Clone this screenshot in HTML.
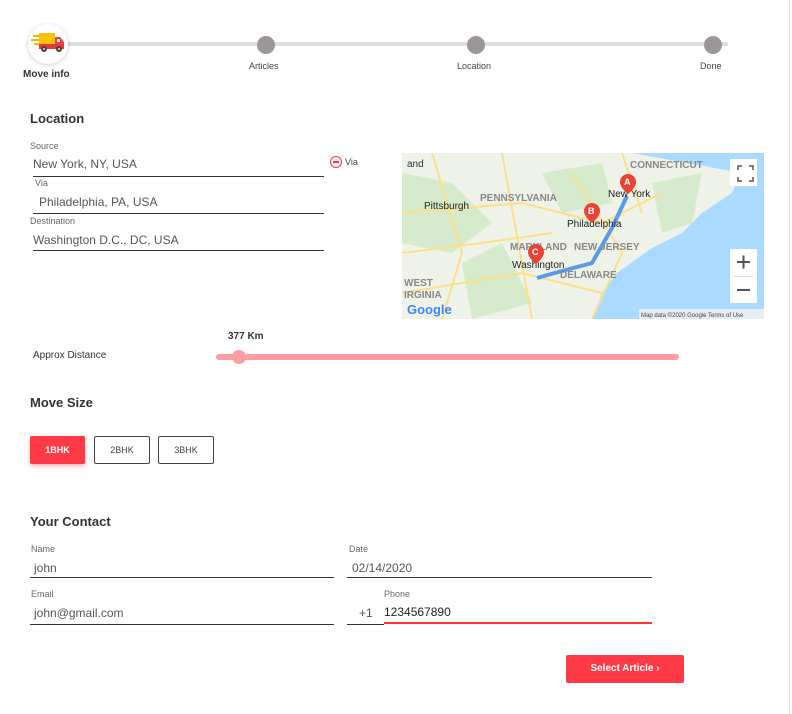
<!DOCTYPE html>
<html><head><meta charset="utf-8"><style>
*{margin:0;padding:0;box-sizing:border-box}
body{width:792px;height:714px;background:#fff;font-family:"Liberation Sans",sans-serif;color:#333;position:relative;overflow:hidden}
.a{position:absolute}
.lbl{font-size:9px;color:#666}
.val{font-size:12px;color:#555}
.line{height:1px;background:#333}
.h{font-size:13px;font-weight:bold;color:#333}
.dot{width:18px;height:18px;border-radius:50%;background:#9b9797}
.st{font-size:9px;color:#444}
.btn{border:1px solid #444;border-radius:2px;font-size:9px;color:#444;text-align:center;line-height:26px;height:28px}
</style></head><body>
<div class="a" style="left:789px;top:0;width:1px;height:714px;background:#e6e6e6"></div>
<div class="a" style="left:60px;top:42px;width:668px;height:4px;background:#dedede"></div>
<div class="a" style="left:28px;top:24px;width:40px;height:40px;border-radius:50%;background:#fff;box-shadow:0 1px 4px rgba(0,0,0,.2)"></div>
<svg class="a" style="left:31px;top:33px" width="34" height="20" viewBox="0 0 34 20">
<rect x="2" y="2" width="6" height="2" fill="#f7b500"/><rect x="0" y="6" width="8" height="2" fill="#f7b500"/><rect x="3" y="10" width="5" height="2" fill="#f7b500"/>
<rect x="8" y="0" width="16" height="14" fill="#f9c200"/>
<path d="M24 4h5l4 5v7H24z" fill="#f0413f"/><rect x="8" y="11" width="25" height="5" fill="#e63a3a"/>
<rect x="26" y="6" width="3" height="3" fill="#fff"/>
<circle cx="13" cy="16" r="3" fill="#444"/><circle cx="28" cy="16" r="3" fill="#444"/>
<circle cx="13" cy="16" r="1" fill="#ddd"/><circle cx="28" cy="16" r="1" fill="#ddd"/></svg>
<div class="a" style="left:23px;top:69px;font-size:10px;font-weight:bold;color:#333">Move info</div>
<div class="a dot" style="left:257px;top:36px"></div><div class="a st" style="left:249px;top:61px">Articles</div>
<div class="a dot" style="left:467px;top:36px"></div><div class="a st" style="left:457px;top:61px">Location</div>
<div class="a dot" style="left:704px;top:36px"></div><div class="a st" style="left:700px;top:61px">Done</div>

<div class="a h" style="left:30px;top:111px">Location</div>
<div class="a lbl" style="left:30px;top:141px">Source</div>
<div class="a val" style="left:33px;top:157px">New York, NY, USA</div>
<div class="a line" style="left:33px;top:176px;width:291px"></div>
<div class="a" style="left:330px;top:156px;width:12px;height:12px;border:1.3px solid #f33;border-radius:50%"></div>
<div class="a" style="left:333px;top:161px;width:6px;height:1.5px;background:#f33"></div>
<div class="a" style="left:345px;top:157px;font-size:9px;color:#444">Via</div>
<div class="a lbl" style="left:35px;top:178px">Via</div>
<div class="a val" style="left:39px;top:195px">Philadelphia, PA, USA</div>
<div class="a line" style="left:33px;top:213px;width:291px"></div>
<div class="a lbl" style="left:30px;top:216px">Destination</div>
<div class="a val" style="left:33px;top:233px">Washington D.C., DC, USA</div>
<div class="a line" style="left:33px;top:250px;width:291px"></div>

<svg class="a" style="left:402px;top:153px" width="362" height="166" viewBox="0 0 362 166">
<rect width="362" height="166" fill="#eef2e8"/>
<path d="M0 20L50 30L90 70L50 100L0 90Z M60 110L100 90L130 150L70 166Z M140 20L200 10L210 50L160 60Z M250 30L300 20L290 70L260 80Z" fill="#cfe8c4" opacity=".8"/>
<path d="M230 0H362V166H190L200 140L215 120L250 95L280 80L300 60L330 40L340 20Z" fill="#aadaff"/>
<path d="M0 60L120 50L200 70L260 40M30 0L60 100L40 166M100 0L130 166M170 20L220 100L190 166M0 140L120 120L200 140M0 100L80 90L150 80M220 0L240 60" stroke="#fbe08a" stroke-width="2" fill="none"/>
<path d="M225 43L210 75L190 110L160 118L135 125" stroke="#5a9ae6" stroke-width="4" fill="none"/>
<text x="5" y="14" font-size="10" fill="#333">and</text>
<text x="78" y="48" font-size="10" fill="#888" font-weight="bold">PENNSYLVANIA</text>
<text x="228" y="15" font-size="10" fill="#888" font-weight="bold">CONNECTICUT</text>
<text x="22" y="56" font-size="10" fill="#222">Pittsburgh</text>
<text x="206" y="44" font-size="10" fill="#222">New York</text>
<text x="165" y="74" font-size="10" fill="#222">Philadelphia</text>
<text x="172" y="97" font-size="10" fill="#888" font-weight="bold">NEW JERSEY</text>
<text x="108" y="97" font-size="10" fill="#888" font-weight="bold">MARYLAND</text>
<text x="110" y="115" font-size="10" fill="#222">Washington</text>
<text x="158" y="125" font-size="10" fill="#888" font-weight="bold">DELAWARE</text>
<text x="2" y="133" font-size="10" fill="#888" font-weight="bold">WEST</text>
<text x="2" y="145" font-size="10" fill="#888" font-weight="bold">IRGINIA</text>
<text x="5" y="161" font-size="13" font-weight="bold" fill="#4285f4">Google</text>
<rect x="237" y="156" width="125" height="10" fill="#f0f0f0" opacity=".85"/>
<text x="239" y="164" font-size="6" fill="#444">Map data ©2020 Google   Terms of Use</text>
<g fill="#ea4335"><path d="M226 21a8 8 0 0 1 8 8c0 6-8 12-8 12s-8-6-8-12a8 8 0 0 1 8-8z"/><path d="M190 50a8 8 0 0 1 8 8c0 6-8 12-8 12s-8-6-8-12a8 8 0 0 1 8-8z"/><path d="M134 91a8 8 0 0 1 8 8c0 6-8 12-8 12s-8-6-8-12a8 8 0 0 1 8-8z"/></g>
<g fill="#fff" font-size="9" font-weight="bold"><text x="222" y="32">A</text><text x="186" y="61">B</text><text x="130" y="102">C</text></g>
<rect x="328" y="6" width="27" height="27" fill="#fff"/>
<path d="M336 17v-4h4M347 13h4v4M351 24v4h-4M340 28h-4v-4" stroke="#555" stroke-width="1.5" fill="none"/>
<rect x="328" y="96" width="27" height="54" fill="#fff"/>
<path d="M335 109h13M341.5 102.5v13M335 137h13" stroke="#555" stroke-width="2"/>
<rect x="332" y="123" width="19" height="1" fill="#ddd"/>
</svg>

<div class="a" style="left:228px;top:331px;font-size:10px;font-weight:bold;color:#333">377 Km</div>
<div class="a" style="left:33px;top:350px;font-size:10px;color:#333">Approx Distance</div>
<div class="a" style="left:216px;top:354px;width:463px;height:6px;border-radius:3px;background:#ff9da2"></div>
<div class="a" style="left:232px;top:350px;width:14px;height:14px;border-radius:50%;background:#ff9da2"></div>

<div class="a h" style="left:30px;top:395px">Move Size</div>
<div class="a btn" style="left:30px;top:436px;width:55px;background:#ff3a47;border-color:#ff3a47;color:#fff;font-weight:bold;box-shadow:0 2px 5px rgba(255,58,71,.4)">1BHK</div>
<div class="a btn" style="left:94px;top:436px;width:56px">2BHK</div>
<div class="a btn" style="left:158px;top:436px;width:56px">3BHK</div>

<div class="a h" style="left:30px;top:514px">Your Contact</div>
<div class="a lbl" style="left:31px;top:544px">Name</div>
<div class="a val" style="left:34px;top:561px">john</div>
<div class="a line" style="left:30px;top:577px;width:304px"></div>
<div class="a lbl" style="left:349px;top:544px">Date</div>
<div class="a val" style="left:352px;top:561px">02/14/2020</div>
<div class="a line" style="left:347px;top:577px;width:305px"></div>
<div class="a lbl" style="left:31px;top:589px">Email</div>
<div class="a val" style="left:34px;top:606px">john@gmail.com</div>
<div class="a line" style="left:30px;top:624px;width:304px"></div>
<div class="a lbl" style="left:384px;top:589px">Phone</div>
<div class="a val" style="left:359px;top:606px">+1</div>
<div class="a val" style="left:384px;top:605px;color:#222">1234567890</div>
<div class="a line" style="left:347px;top:624px;width:37px"></div>
<div class="a" style="left:384px;top:622px;width:268px;height:2px;background:#f33"></div>
<div class="a" style="left:566px;top:655px;width:118px;height:28px;background:#ff3a47;border-radius:2px;color:#fff;font-size:10px;font-weight:bold;text-align:center;line-height:28px">Select Article ›</div>
</body></html>
